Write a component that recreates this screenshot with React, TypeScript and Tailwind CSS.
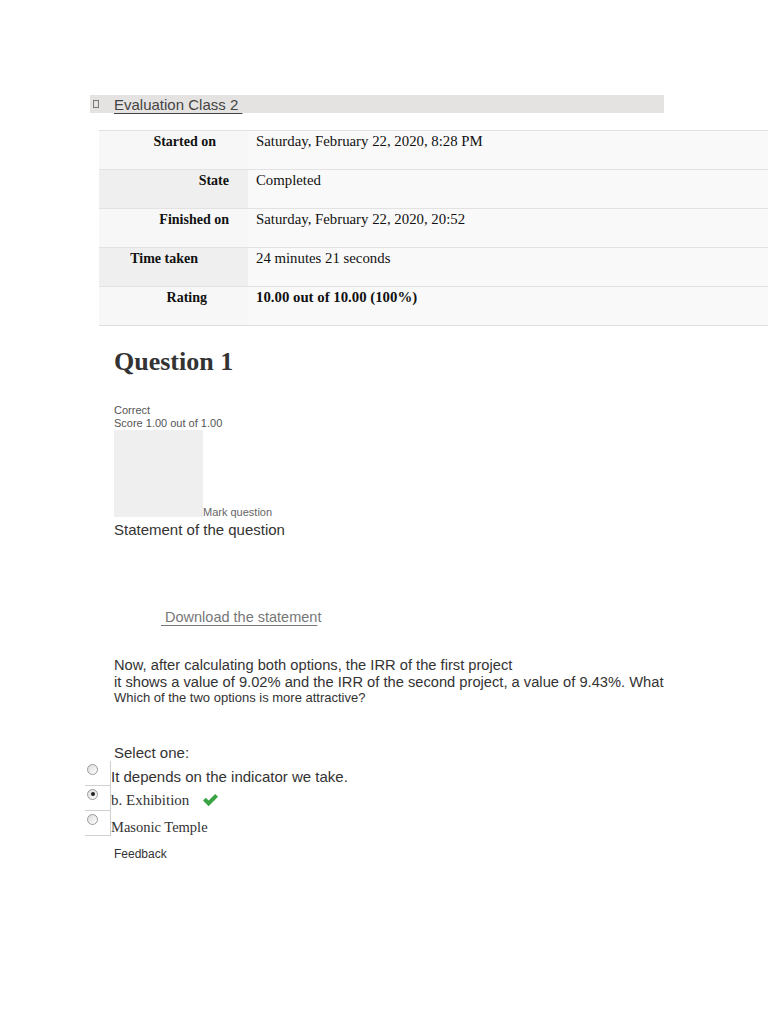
import type { ReactNode } from "react"

const sans = "font-['Liberation_Sans',Arial,sans-serif]"
const serif = "font-['Liberation_Serif','Times_New_Roman',serif]"

const rows: { label: string; value: string; pr: string; dark: boolean; bold?: boolean }[] = [
  { label: "Started on", value: "Saturday, February 22, 2020, 8:28 PM", pr: "pr-[32px]", dark: false },
  { label: "State", value: "Completed", pr: "pr-[19px]", dark: true },
  { label: "Finished on", value: "Saturday, February 22, 2020, 20:52", pr: "pr-[19px]", dark: false },
  { label: "Time taken", value: "24 minutes 21 seconds", pr: "pr-[50px]", dark: true },
  { label: "Rating", value: "10.00 out of 10.00 (100%)", pr: "pr-[41px]", dark: false, bold: true },
]

function Radio({ checked }: { checked?: boolean }) {
  return (
    <span className="mt-[3px] ml-[2px] flex h-[11px] w-[11px] items-center justify-center rounded-full border border-[#9a9a9a] bg-gradient-to-br from-[#dcdcdc] to-white">
      {checked && <span className="h-[4px] w-[4px] rounded-full bg-[#222]" />}
    </span>
  )
}

function Option({ checked, children }: { checked?: boolean; children: ReactNode }) {
  return (
    <div className="flex h-[25px]">
      <div className="h-[25px] w-[26px] border-r border-b border-[#d0d0d0]">
        <Radio checked={checked} />
      </div>
      <div className="pt-[5px]">{children}</div>
    </div>
  )
}

export default function App() {
  return (
    <div className={`min-h-[1024px] w-[768px] bg-white pt-[95px] text-[#333] ${sans}`}>
      {/* Section header */}
      <div className="ml-[90px] flex h-[18px] w-[574px] items-center bg-[#e4e3e2]">
        <span className="ml-[3px] inline-block h-[8px] w-[6px] border border-[#777]" />
        <span className="ml-[15px] text-[15px] leading-none text-[#444] underline underline-offset-[3px]">
          Evaluation Class 2&nbsp;
        </span>
      </div>

      {/* Summary table */}
      <div className={`ml-[99px] mt-[17px] border-b border-[#dedede] ${serif} text-[#111]`}>
        {rows.map((r) => (
          <div key={r.label} className="flex h-[39px] border-t border-[#e2e2e2] bg-[#f9f9f9]">
            <div
              className={`w-[149px] shrink-0 pt-[2px] text-right text-[14px] font-bold leading-[18px] ${r.pr} ${
                r.dark ? "bg-[#efefef]" : "bg-[#f7f7f7]"
              }`}
            >
              {r.label}
            </div>
            <div className={`pl-[8px] pt-[1px] text-[14.8px] leading-[18px] ${r.bold ? "font-bold" : ""}`}>
              {r.value}
            </div>
          </div>
        ))}
      </div>

      {/* Question */}
      <div className="pl-[114px]">
        <h2 className={`mt-[21px] text-[26px] font-bold leading-[30px] text-[#333] ${serif}`}>Question 1</h2>

        <div className="mt-[27px] text-[11px] leading-[13px] text-[#555]">
          <div>Correct</div>
          <div>Score 1.00 out of 1.00</div>
        </div>

        <div className="flex items-end">
          <div className="h-[87px] w-[89px] bg-[#efefef]" />
          <span className="relative top-[2px] text-[11px] leading-[13px] text-[#666]">Mark question</span>
        </div>

        <div className="mt-[4px] text-[15px] leading-[18px]">Statement of the question</div>

        <div className="mt-[68px] pl-[47px] text-[14.5px] text-[#777]">
          <span className="underline underline-offset-[3px]">&nbsp;Download the statemen</span>t
        </div>

        <div className="mt-[28px] text-[14.7px] leading-[17px] text-[#333]">
          <div>Now, after calculating both options, the IRR of the first project</div>
          <div>it shows a value of 9.02% and the IRR of the second project, a value of 9.43%. What</div>
          <div className="text-[13px] leading-[14px]">Which of the two options is more attractive?</div>
        </div>

        <div className="mt-[39px] text-[15px] leading-[18px]">Select one:</div>
      </div>

      <div className="ml-[85px] mt-[-1px]">
        <Option>
          <span className="relative top-[-1px] text-[15px] leading-[18px]">It depends on the indicator we take.</span>
        </Option>
        <Option checked>
          <span className={`flex items-center text-[15px] leading-[18px] ${serif}`}>
            b. Exhibition
            <svg className="ml-[13px]" width="17" height="14" viewBox="0 0 17 14">
              <path d="M1 7.5 L3.8 4.8 L6.6 7.6 L13.2 1 L16 3.8 L6.6 13.2 Z" fill="#3aa344" />
            </svg>
          </span>
        </Option>
        <Option>
          <span className={`relative top-[-1px] text-[14.5px] leading-[18px] ${serif}`}>Masonic Temple</span>
        </Option>
      </div>

      <div className="ml-[114px] mt-[11px] text-[12px] leading-[14px] text-[#333]">Feedback</div>
    </div>
  )
}
